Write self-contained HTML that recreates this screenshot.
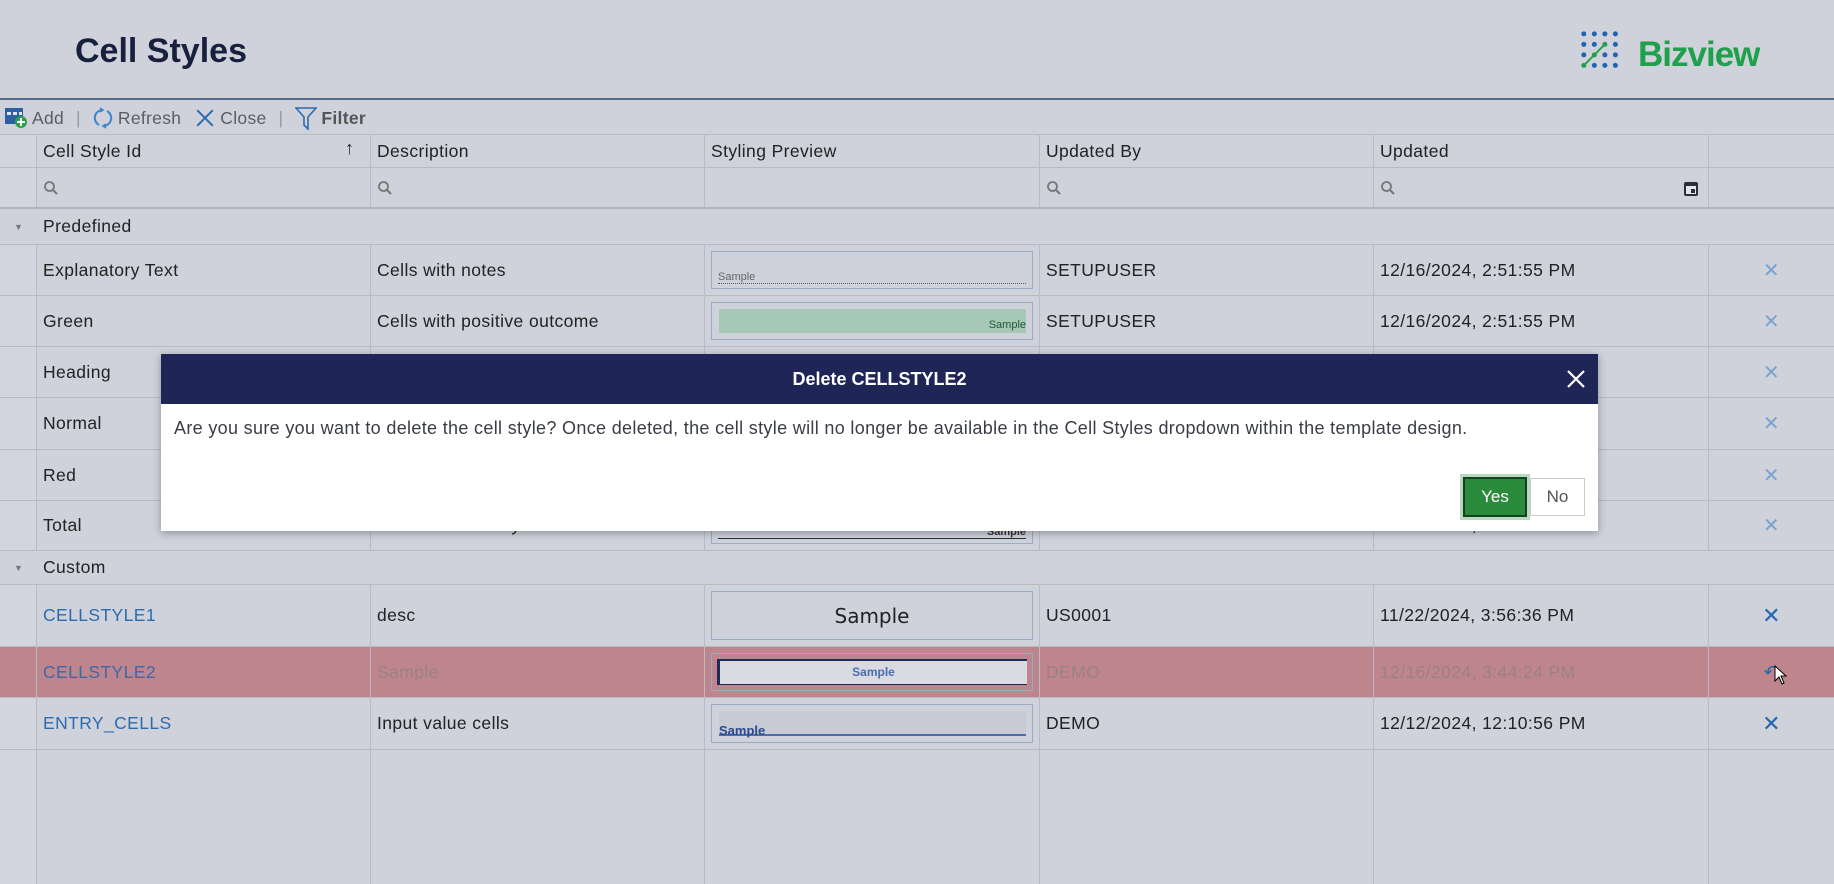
<!DOCTYPE html>
<html><head><meta charset="utf-8"><style>
*{margin:0;padding:0;box-sizing:border-box}
body{width:1834px;height:884px;overflow:hidden;background:#cfd1db;font-family:"Liberation Sans",sans-serif;color:#222;position:relative}
.abs{position:absolute}
.title{left:75px;top:32px;font-size:34px;font-weight:bold;color:#17203d}
.hline{left:0;top:98px;width:1834px;height:2px;background:#50698f}
.tb{top:106px;height:24px;font-size:17.5px;letter-spacing:0.3px;color:#5a5d66;display:flex;align-items:center}
.row{position:absolute;left:0;width:1834px;display:flex;border-bottom:1px solid #b8bbc6}
.c{border-right:1px solid #b8bbc6;height:100%;display:flex;align-items:center;padding-left:6px;font-size:17.5px;letter-spacing:0.4px;white-space:nowrap;position:relative}
.c0{width:37px;background:#d3d5de}
.c1{width:334px}.c2{width:334px}.c3{width:335px}.c4{width:334px}.c5{width:335px}.c6{width:125px;border-right:none;justify-content:center;padding-left:0}
.grp{font-size:17.5px;letter-spacing:0.4px;padding-left:43px;align-items:center;display:flex}
.box{position:absolute;left:6px;right:6px;top:6px;bottom:6px;border:1px solid #9aabc8;letter-spacing:0}
.x{color:#7aa3cf;font-size:20px}
.xd{color:#2466b0;font-size:22px}
.link{color:#2a6cb0}
.mg{display:inline-block;width:16px;height:16px}
</style></head><body>
<div class="abs title">Cell Styles</div>
<svg class="abs" style="left:1580px;top:30px" width="44" height="44" viewBox="0 0 46 46">
<g fill="#1f63b3">
<circle cx="4" cy="4" r="2.6"/><circle cx="15" cy="4" r="2.6"/><circle cx="26" cy="4" r="2.6"/><circle cx="37" cy="4" r="2.6"/>
<circle cx="4" cy="15" r="2.6"/><circle cx="15" cy="15" r="2.6"/><circle cx="37" cy="15" r="2.6"/>
<circle cx="4" cy="26" r="2.6"/><circle cx="26" cy="26" r="2.6"/><circle cx="37" cy="26" r="2.6"/>
<circle cx="15" cy="37" r="2.6"/><circle cx="26" cy="37" r="2.6"/><circle cx="37" cy="37" r="2.6"/></g>
<g fill="#22a04d"><circle cx="4" cy="37" r="2.6"/><circle cx="26" cy="15" r="2.6"/><circle cx="15" cy="26" r="2.6"/></g>
<path d="M4 37 L26 15" stroke="#22a04d" stroke-width="2"/>
</svg>
<div class="abs" style="left:1638px;top:35px;font-size:35px;font-weight:bold;color:#1fa04a;letter-spacing:-1px">Bizview</div>
<div class="abs hline"></div>

<div class="abs tb" style="left:4px">
<svg width="24" height="22" viewBox="0 0 24 22"><rect x="1" y="1" width="18" height="16" fill="#2d5fa3"/><rect x="3" y="5" width="4" height="3" fill="#dfe6f2"/><rect x="9" y="5" width="4" height="3" fill="#dfe6f2"/><rect x="15" y="5" width="3" height="3" fill="#dfe6f2"/><circle cx="17" cy="15" r="6" fill="#2e9e4b"/><path d="M17 11v8M13 15h8" stroke="#fff" stroke-width="2"/></svg>
<span style="margin-left:4px">Add</span><span style="margin:0 12px;color:#999">|</span>
<svg width="20" height="22" viewBox="0 0 20 22"><path d="M9 3 A8 8 0 0 0 6 18" stroke="#3a86cf" stroke-width="2" fill="none"/><path d="M11 19 A8 8 0 0 0 14 4" stroke="#3a86cf" stroke-width="2" fill="none"/><path d="M7 1l3 2-3 2M13 17l-3 2 3 2" stroke="#3a86cf" stroke-width="1.6" fill="none"/></svg>
<span style="margin-left:5px">Refresh</span>
<svg style="margin-left:14px" width="20" height="20" viewBox="0 0 18 18"><path d="M2 2L16 16M16 2L2 16" stroke="#2a6cb0" stroke-width="1.8"/></svg>
<span style="margin-left:5px">Close</span><span style="margin:0 12px;color:#999">|</span>
<svg width="22" height="24" viewBox="0 0 22 24"><path d="M1 2H21L13 11V23L9 19V11Z" stroke="#2a6cb0" stroke-width="1.6" fill="none"/></svg>
<b style="margin-left:4px;color:#555">Filter</b>
</div>

<!-- header -->
<div class="row" style="top:134px;height:34px;border-top:1px solid #b8bbc6">
<div class="c c0"></div><div class="c c1">Cell Style Id<span style="position:absolute;left:308px;top:3px;font-size:18px">↑</span></div><div class="c c2">Description</div><div class="c c3">Styling Preview</div><div class="c c4">Updated By</div><div class="c c5">Updated</div><div class="c c6"></div></div>
<div class="row" style="top:168px;height:41px;border-bottom:2px solid #b0b3bf">
<div class="c c0"></div>
<div class="c c1"><svg class="mg" viewBox="0 0 16 16"><circle cx="6.5" cy="6.5" r="4.5" stroke="#777" stroke-width="1.8" fill="none"/><path d="M10 10L14 14" stroke="#777" stroke-width="2"/></svg></div>
<div class="c c2"><svg class="mg" viewBox="0 0 16 16"><circle cx="6.5" cy="6.5" r="4.5" stroke="#777" stroke-width="1.8" fill="none"/><path d="M10 10L14 14" stroke="#777" stroke-width="2"/></svg></div>
<div class="c c3"></div>
<div class="c c4"><svg class="mg" viewBox="0 0 16 16"><circle cx="6.5" cy="6.5" r="4.5" stroke="#777" stroke-width="1.8" fill="none"/><path d="M10 10L14 14" stroke="#777" stroke-width="2"/></svg></div>
<div class="c c5"><svg class="mg" viewBox="0 0 16 16"><circle cx="6.5" cy="6.5" r="4.5" stroke="#777" stroke-width="1.8" fill="none"/><path d="M10 10L14 14" stroke="#777" stroke-width="2"/></svg>
<svg style="position:absolute;right:10px;top:13px" width="14" height="15" viewBox="0 0 14 15"><rect x="0" y="1" width="14" height="14" rx="2" fill="#2a2f3a"/><rect x="2" y="5" width="10" height="8" fill="#e5e6ec"/><rect x="7" y="8" width="4" height="4" fill="#2a2f3a"/></svg></div>
<div class="c c6"></div></div>
<div class="row grp" style="top:209px;height:36px"><span style="position:absolute;left:14px;font-size:9px;color:#777">▼</span>Predefined</div>

<div class="row" style="top:245px;height:51px"><div class="c c0"></div><div class="c c1">Explanatory Text</div><div class="c c2">Cells with notes</div><div class="c c3"><div class="box"><span style="position:absolute;left:6px;right:6px;bottom:4px;font-size:11px;color:#666;border-bottom:1px dotted #555">Sample</span></div></div><div class="c c4">SETUPUSER</div><div class="c c5">12/16/2024, 2:51:55 PM</div><div class="c c6 x">✕</div></div>
<div class="row" style="top:296px;height:51px"><div class="c c0"></div><div class="c c1">Green</div><div class="c c2">Cells with positive outcome</div><div class="c c3"><div class="box"><div style="position:absolute;left:7px;right:6px;top:6px;bottom:6px;background:#a6c8b4;font-size:11px;color:#1d5a32;text-align:right;padding-top:10px">Sample</div></div></div><div class="c c4">SETUPUSER</div><div class="c c5">12/16/2024, 2:51:55 PM</div><div class="c c6 x">✕</div></div>
<div class="row" style="top:347px;height:51px"><div class="c c0"></div><div class="c c1">Heading</div><div class="c c2"></div><div class="c c3"></div><div class="c c4"></div><div class="c c5"></div><div class="c c6 x">✕</div></div>
<div class="row" style="top:398px;height:52px"><div class="c c0"></div><div class="c c1">Normal</div><div class="c c2"></div><div class="c c3"></div><div class="c c4"></div><div class="c c5"></div><div class="c c6 x">✕</div></div>
<div class="row" style="top:450px;height:51px"><div class="c c0"></div><div class="c c1">Red</div><div class="c c2"></div><div class="c c3"></div><div class="c c4"></div><div class="c c5"></div><div class="c c6 x">✕</div></div>
<div class="row" style="top:501px;height:50px"><div class="c c0"></div><div class="c c1">Total</div><div class="c c2">Total or Summary</div><div class="c c3"><div class="box"><span style="position:absolute;left:6px;right:6px;bottom:4px;font-size:11px;font-weight:bold;color:#333;text-align:right;border-bottom:1px solid #333">Sample</span></div></div><div class="c c4">SETUPUSER</div><div class="c c5">12/16/2024, 2:51:55 PM</div><div class="c c6 x">✕</div></div>
<div class="row grp" style="top:551px;height:34px"><span style="position:absolute;left:14px;font-size:9px;color:#777">▼</span>Custom</div>
<div class="row" style="top:585px;height:62px"><div class="c c0"></div><div class="c c1 link">CELLSTYLE1</div><div class="c c2">desc</div><div class="c c3"><div class="box" style="display:flex;align-items:center;justify-content:center;font-size:20px;font-family:'DejaVu Sans',sans-serif;color:#222">Sample</div></div><div class="c c4">US0001</div><div class="c c5">11/22/2024, 3:56:36 PM</div><div class="c c6 xd">✕</div></div>
<div class="row" style="top:647px;height:51px;background:#be868c"><div class="c c0" style="background:#be868c"></div><div class="c c1" style="color:#3f67a8">CELLSTYLE2</div><div class="c c2" style="color:#9a8186">Sample</div><div class="c c3"><div class="box"><div style="position:absolute;left:5px;right:5px;top:5px;bottom:5px;background:#d9dae2;border:2px solid #1f2a5c;border-left-width:3px;border-right:none;border-bottom-width:1px;font-size:12px;font-weight:bold;color:#4a6eb0;text-align:center;padding-top:4px">Sample</div></div></div><div class="c c4" style="color:#9a8186">DEMO</div><div class="c c5" style="color:#9a8186">12/16/2024, 3:44:24 PM</div><div class="c c6" style="color:#2466b0;font-size:18px">↶</div></div>
<div class="row" style="top:698px;height:52px"><div class="c c0"></div><div class="c c1 link">ENTRY_CELLS</div><div class="c c2">Input value cells</div><div class="c c3"><div class="box"><div style="position:absolute;left:7px;right:6px;top:6px;bottom:6px;background:#c8cad4;border-bottom:2px solid #4a6eb0;font-size:13px;font-weight:bold;color:#2a4a8f;padding-top:12px">Sample</div></div></div><div class="c c4">DEMO</div><div class="c c5">12/12/2024, 12:10:56 PM</div><div class="c c6 xd">✕</div></div>
<div class="row" style="top:750px;height:134px;border-bottom:none"><div class="c c0"></div><div class="c c1"></div><div class="c c2"></div><div class="c c3"></div><div class="c c4"></div><div class="c c5"></div><div class="c c6"></div></div>

<!-- dialog -->
<div class="abs" style="left:161px;top:354px;width:1437px;height:177px;background:#fff;box-shadow:0 2px 8px rgba(0,0,0,.3)">
<div style="height:50px;background:#1f2557;color:#fff;font-weight:bold;font-size:18px;text-align:center;line-height:50px;position:relative">Delete CELLSTYLE2
<svg style="position:absolute;right:12px;top:15px" width="20" height="20" viewBox="0 0 20 20"><path d="M2 2L18 18M18 2L2 18" stroke="#fff" stroke-width="2.2"/></svg></div>
<div style="position:absolute;left:13px;top:64px;font-size:18px;letter-spacing:0.33px;color:#3a3d47;white-space:nowrap">Are you sure you want to delete the cell style? Once deleted, the cell style will no longer be available in the Cell Styles dropdown within the template design.</div>
<div style="position:absolute;left:1302px;top:123px;width:64px;height:40px;background:#2a8b3c;border:2px solid #173f22;outline:3px solid #b8d9bf;color:#fff;font-size:17px;text-align:center;line-height:36px">Yes</div>
<div style="position:absolute;left:1369px;top:124px;width:55px;height:38px;border:1px solid #ccc;color:#555;font-size:17px;text-align:center;line-height:36px">No</div>
</div>
<svg class="abs" style="left:1774px;top:665px" width="14" height="20" viewBox="0 0 14 20"><path d="M1 1V16L5 12L8 19L10 18L7 11H12Z" fill="#fff" stroke="#000" stroke-width="1"/></svg>
</body></html>
